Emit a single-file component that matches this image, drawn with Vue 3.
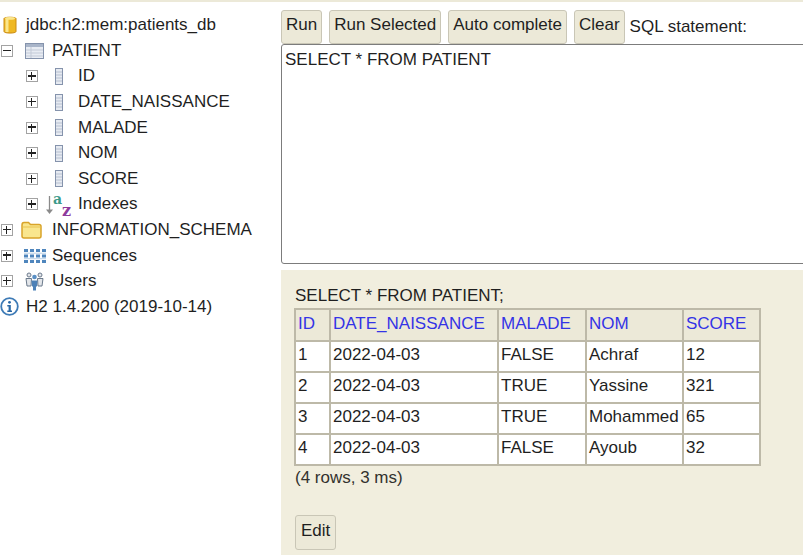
<script setup>
const sql = "SELECT * FROM PATIENT";
const columns = ["ID", "DATE_NAISSANCE", "MALADE", "NOM", "SCORE"];
const widths = [35, 168, 88, 97, 77];
const rows = [
  ["1", "2022-04-03", "FALSE", "Achraf", "12"],
  ["2", "2022-04-03", "TRUE", "Yassine", "321"],
  ["3", "2022-04-03", "TRUE", "Mohammed", "65"],
  ["4", "2022-04-03", "FALSE", "Ayoub", "32"],
];
</script>

<template>
  <div class="page">
    <div class="strip"></div>
    <div class="main">
      <aside class="tree">
        <div class="row">
          <span class="slot conn">
            <svg width="14" height="20" viewBox="0 0 14 20">
              <path d="M1 3.5C1 1.8 13 1.8 13 3.5V16.5C13 18.6 1 18.6 1 16.5Z" fill="#efb823" stroke="#c98a12" />
              <path d="M4 4V17" stroke="#fbe68c" stroke-width="3" />
              <ellipse cx="7" cy="3.4" rx="5" ry="1.3" fill="#fbe68c" />
            </svg>
          </span>
          <span>jdbc:h2:mem:patients_db</span>
        </div>

        <div class="row">
          <span class="slot box-slot"><span class="box"><i class="h"></i></span></span>
          <span class="slot icon-slot">
            <svg width="19" height="16" viewBox="0 0 19 16">
              <rect x="0.5" y="0.5" width="18" height="15" fill="#e8ecf3" stroke="#8593ac" />
              <rect x="1" y="1" width="17" height="3" fill="#a9b5c9" />
              <path d="M1 7H18M1 10H18M1 13H18M6 4V15" stroke="#c3cad7" />
            </svg>
          </span>
          <span>PATIENT</span>
        </div>

        <div v-for="col in columns" :key="col" class="row child">
          <span class="slot box-slot"><span class="box"><i class="h"></i><i class="v"></i></span></span>
          <span class="slot icon-slot">
            <svg class="col-icon" width="8" height="17" viewBox="0 0 8 17">
              <rect x="0.5" y="0.5" width="7" height="16" fill="#e6eaf1" stroke="#8593ac" />
              <path d="M1 4H7M1 7H7M1 10H7M1 13H7" stroke="#b7c0d0" />
            </svg>
          </span>
          <span>{{ col }}</span>
        </div>

        <div class="row child">
          <span class="slot box-slot"><span class="box"><i class="h"></i><i class="v"></i></span></span>
          <span class="slot icon-slot">
            <svg class="idx-icon" width="28" height="32" viewBox="0 -4 28 32">
              <path d="M5.500 4V19" stroke="#8a8a8a" stroke-width="1.300" />
              <path d="M2 17.500H9L5.500 22Z" fill="#8a8a8a" />
              <text x="9" y="12" class="idx-a">a</text>
              <text x="18.100" y="24" class="idx-z">z</text>
            </svg>
          </span>
          <span>Indexes</span>
        </div>

        <div class="row">
          <span class="slot box-slot"><span class="box"><i class="h"></i><i class="v"></i></span></span>
          <span class="slot icon-slot">
            <svg class="folder" width="21" height="18" viewBox="0 0 21 18">
              <path d="M1 4C1 2 2 1.500 3 1.500H7.500L9.500 3.500H18C19.500 3.500 20 4.500 20 5.500V15C20 16.500 19 17 18 17H3C2 17 1 16.500 1 15Z" fill="#f9e68e" stroke="#d9a42a" stroke-width="1.500" />
              <path d="M1.500 6H19.500" stroke="#e9c24f" />
            </svg>
          </span>
          <span>INFORMATION_SCHEMA</span>
        </div>

        <div class="row">
          <span class="slot box-slot"><span class="box"><i class="h"></i><i class="v"></i></span></span>
          <span class="slot icon-slot">
            <svg class="seq" width="22" height="16" viewBox="0 0 22 16">
              <g fill="#4f86bd">
                <rect x="0" y="1" width="4" height="3" /><rect x="6" y="1" width="4" height="3" /><rect x="12" y="1" width="4" height="3" /><rect x="18" y="1" width="4" height="3" />
                <rect x="0" y="6.500" width="4" height="3" /><rect x="6" y="6.500" width="4" height="3" /><rect x="12" y="6.500" width="4" height="3" /><rect x="18" y="6.500" width="4" height="3" />
                <rect x="0" y="12" width="4" height="3" /><rect x="6" y="12" width="4" height="3" /><rect x="12" y="12" width="4" height="3" /><rect x="18" y="12" width="4" height="3" />
              </g>
              <path d="M0 5.200H22M0 10.700H22" stroke="#b9d0e6" />
            </svg>
          </span>
          <span>Sequences</span>
        </div>

        <div class="row">
          <span class="slot box-slot"><span class="box"><i class="h"></i><i class="v"></i></span></span>
          <span class="slot icon-slot">
            <svg width="19" height="20" viewBox="0 0 19 20">
              <g fill="#e3e6ea" stroke="#6b7a8c" stroke-width="1">
                <circle cx="4" cy="4" r="2" />
                <path d="M1 7.500H6.500L6 15H2Z" />
                <circle cx="15" cy="4" r="2" />
                <path d="M12.500 7.500H18L17 15H13Z" />
              </g>
              <circle cx="9.500" cy="6" r="2.300" fill="#5a8fc4" />
              <path d="M6.500 9.500H12.500L12 15.500H11V19.500H8V15.500H7Z" fill="#4d81b7" />
            </svg>
          </span>
          <span>Users</span>
        </div>

        <div class="row">
          <span class="slot conn">
            <svg class="info" width="19" height="19" viewBox="0 0 19 19">
              <circle cx="9.500" cy="9.500" r="8.300" fill="#fff" stroke="#3e7bb6" stroke-width="1.800" />
              <circle cx="9.500" cy="5.300" r="1.400" fill="#2a68a5" />
              <path d="M7.300 8H10.800V13.500H12V15H7.300V13.500H8.600V9.500H7.300Z" fill="#2a68a5" />
            </svg>
          </span>
          <span>H2 1.4.200 (2019-10-14)</span>
        </div>
      </aside>

      <section class="content">
        <div class="toolbar">
          <button class="btn">Run</button>
          <button class="btn">Run Selected</button>
          <button class="btn">Auto complete</button>
          <button class="btn">Clear</button>
          <span class="label">SQL statement:</span>
        </div>
        <textarea class="sql" readonly spellcheck="false" :value="sql"></textarea>

        <div class="result">
          <div class="query">{{ sql }};</div>
          <table class="grid">
            <colgroup>
              <col v-for="(w, i) in widths" :key="i" :style="{ width: w + 'px' }" />
            </colgroup>
            <thead>
              <tr>
                <th v-for="h in columns" :key="h">{{ h }}</th>
              </tr>
            </thead>
            <tbody>
              <tr v-for="row in rows" :key="row[0]">
                <td v-for="(cell, i) in row" :key="i">{{ cell }}</td>
              </tr>
            </tbody>
          </table>
          <div class="count">(4 rows, 3 ms)</div>
          <button class="btn edit">Edit</button>
        </div>
      </section>
    </div>
  </div>
</template>

<style>
html,
body {
  margin: 0;
  overflow: hidden;
  background: #fff;
}
</style>

<style scoped>
.page {
  width: 803px;
  height: 555px;
  overflow: hidden;
  font-family: "Liberation Sans", Arial, sans-serif;
  font-size: 17px;
  color: #1f1f1f;
}

.strip {
  height: 2px;
  background: #ece9d8;
}

.main {
  display: flex;
  height: 553px;
}

.tree {
  width: 281px;
  flex: none;
  padding-top: 10.500px;
  box-sizing: border-box;
}

.row {
  display: flex;
  align-items: center;
  height: 25.600px;
  white-space: nowrap;
}

.child {
  padding-left: 26px;
}

.slot {
  display: flex;
  align-items: center;
  flex: none;
}

.slot svg {
  flex: none;
}

.conn {
  width: 26px;
  padding-left: 3px;
  box-sizing: border-box;
}

.info {
  margin-left: -3px;
}

.box-slot {
  width: 26px;
  padding-left: 1px;
  box-sizing: border-box;
}

.child .box-slot {
  padding-left: 0;
}

.icon-slot {
  width: 26px;
  justify-content: flex-end;
  padding-right: 8px;
  box-sizing: border-box;
}

.box {
  position: relative;
  width: 12px;
  height: 12px;
  box-sizing: border-box;
  background: #fff;
  border: 1.500px solid #a3a3a3;
}

.box .h {
  position: absolute;
  left: 1px;
  right: 1px;
  top: 3.750px;
  height: 1.500px;
  background: #222;
}

.box .v {
  position: absolute;
  top: 1px;
  bottom: 1px;
  left: 3.750px;
  width: 1.500px;
  background: #222;
}

.col-icon {
  margin-right: 7px;
}

.idx-icon {
  margin-right: -2px;
}

.idx-a {
  font-family: "DejaVu Serif", serif;
  font-weight: 700;
  font-size: 14px;
  fill: #3c9a8a;
}

.idx-z {
  font-family: "DejaVu Serif", serif;
  font-weight: 700;
  font-size: 16px;
  fill: #8e3a9c;
}

.folder {
  margin-right: 2px;
}

.seq {
  margin-right: -2px;
}

.content {
  flex: 1;
  min-width: 0;
  display: flex;
  flex-direction: column;
}

.toolbar {
  display: flex;
  align-items: center;
  gap: 7px;
  height: 35px;
  padding-top: 7px;
  flex: none;
}

.btn {
  height: 34px;
  padding: 0 4px 2.500px;
  box-sizing: border-box;
  font: inherit;
  color: #1f1f1f;
  background: #ece9d8;
  border: 1.500px solid #c9c6b6;
  border-radius: 3px;
}

.label {
  margin-left: -2px;
}

.sql {
  display: block;
  flex: none;
  width: 560px;
  height: 220px;
  margin: 0;
  padding: 5px 3px;
  box-sizing: border-box;
  font: inherit;
  color: #1f1f1f;
  background: #fff;
  border: 1.500px solid #7c7c7c;
  border-radius: 3px;
  outline: none;
  resize: none;
}

.result {
  flex: 1;
  margin-top: 6px;
  padding: 16px 14px 0;
  background: #f1eede;
}

.query {
  height: 22px;
  line-height: 20px;
}

.grid {
  table-layout: fixed;
  width: 465px;
  margin-left: -1px;
  border-collapse: collapse;
  border: 2px solid #bdb9a8;
}

.grid th,
.grid td {
  height: 31px;
  padding: 0 1px 3px 2px;
  box-sizing: border-box;
  border: 2px solid #bdb9a8;
  text-align: left;
  font-weight: 400;
  background: #fff;
  white-space: nowrap;
}

.grid th {
  height: 32px;
  color: #3434e6;
  background: #ece9d8;
}

.count {
  height: 24px;
  line-height: 24px;
  color: #33322e;
}

.edit {
  display: block;
  margin-top: 25px;
  height: 35px;
  padding: 0 5px 2.500px;
}
</style>
